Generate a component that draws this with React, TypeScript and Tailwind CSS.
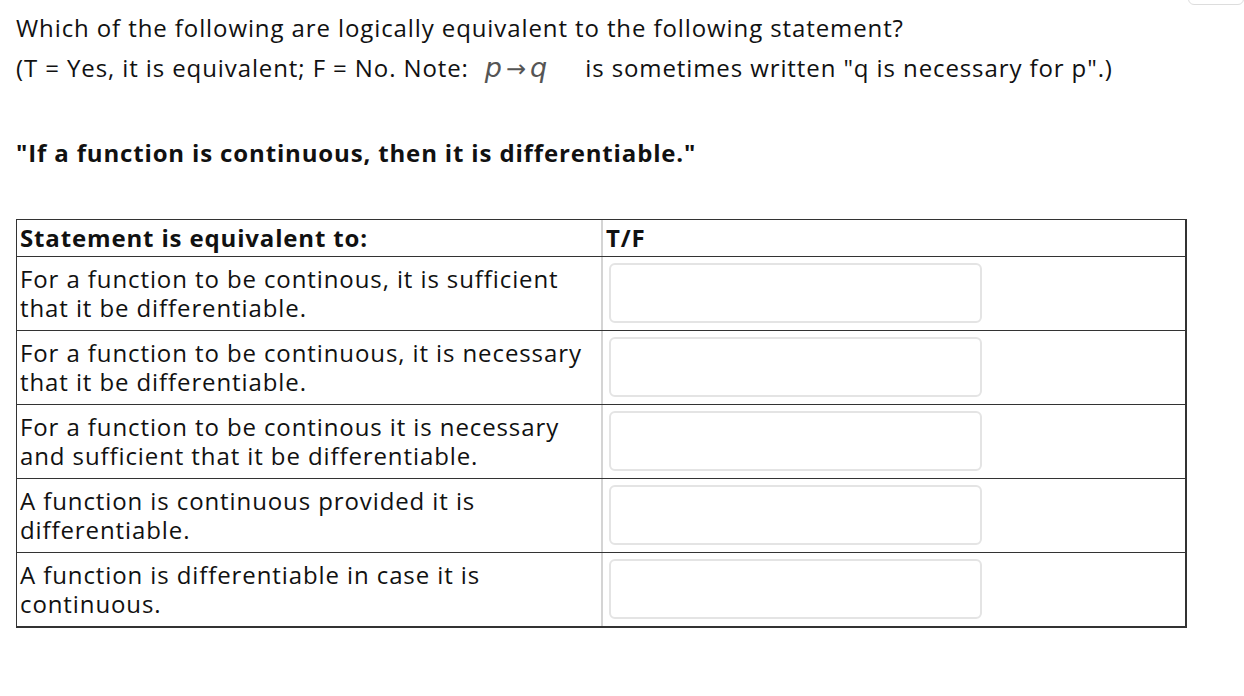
import { useState } from "react";

const rows = [
  ["For a function to be continous, it is sufficient", "that it be differentiable."],
  ["For a function to be continuous, it is necessary", "that it be differentiable."],
  ["For a function to be continous it is necessary", "and sufficient that it be differentiable."],
  ["A function is continuous provided it is", "differentiable."],
  ["A function is differentiable in case it is", "continuous."],
];

function Implies() {
  return (
    <span className="ml-[16px] mr-[38px] inline-flex items-baseline tracking-normal text-[#555] [font-family:'DejaVu_Sans',sans-serif]">
      <span className="text-[27px] italic">p</span>
      <span className="mx-[4px] text-[24px]">→</span>
      <span className="text-[27px] italic">q</span>
    </span>
  );
}

export default function App() {
  const [answers, setAnswers] = useState<string[]>(rows.map(() => ""));

  return (
    <div className="relative min-h-screen bg-white px-4 pt-[13px] text-[24px] tracking-[0.9px] text-[#111] [font-family:'Open_Sans',sans-serif]">
      <div className="absolute right-0 top-[-10px] h-[15px] w-[56px] rounded-md border border-[#ddd]" />

      <p className="leading-[30px]">Which of the following are logically equivalent to the following statement?</p>
      <p className="mt-[10px] leading-[30px]">
        (T = Yes, it is equivalent; F = No. Note:
        <Implies />
        is sometimes written "q is necessary for p".)
      </p>

      <p className="mt-[54px] font-bold leading-[30px] tracking-[0.85px]">
        "If a function is continuous, then it is differentiable."
      </p>

      <div className="mt-[51px] w-[1171px] border-t border-b-2 border-l border-r-2 border-[#333]">
        <div className="grid grid-cols-[586px_1fr]">
          <div className="h-[36px] border-r-2 border-[#d4d4d4] pl-[3px] font-bold leading-[36px] tracking-[0.85px]">
            Statement is equivalent to:
          </div>
          <div className="h-[36px] pl-[3px] font-bold leading-[36px]">T/F</div>
        </div>
        {rows.map(([a, b], i) => (
          <div key={i} className="grid grid-cols-[586px_1fr] border-t border-[#333]">
            <div className="h-[73px] whitespace-nowrap border-r-2 border-[#d4d4d4] pl-[3px] pt-[7px] leading-[29px]">
              {a}
              <br />
              {b}
            </div>
            <div className="pl-[6px] pt-[6px]">
              <input
                type="text"
                value={answers[i]}
                onChange={(e) => setAnswers(answers.map((v, j) => (j === i ? e.target.value : v)))}
                className="h-[60px] w-[373px] rounded-md border-2 border-[#e4e4e4] bg-white px-2 outline-none"
              />
            </div>
          </div>
        ))}
      </div>
    </div>
  );
}
